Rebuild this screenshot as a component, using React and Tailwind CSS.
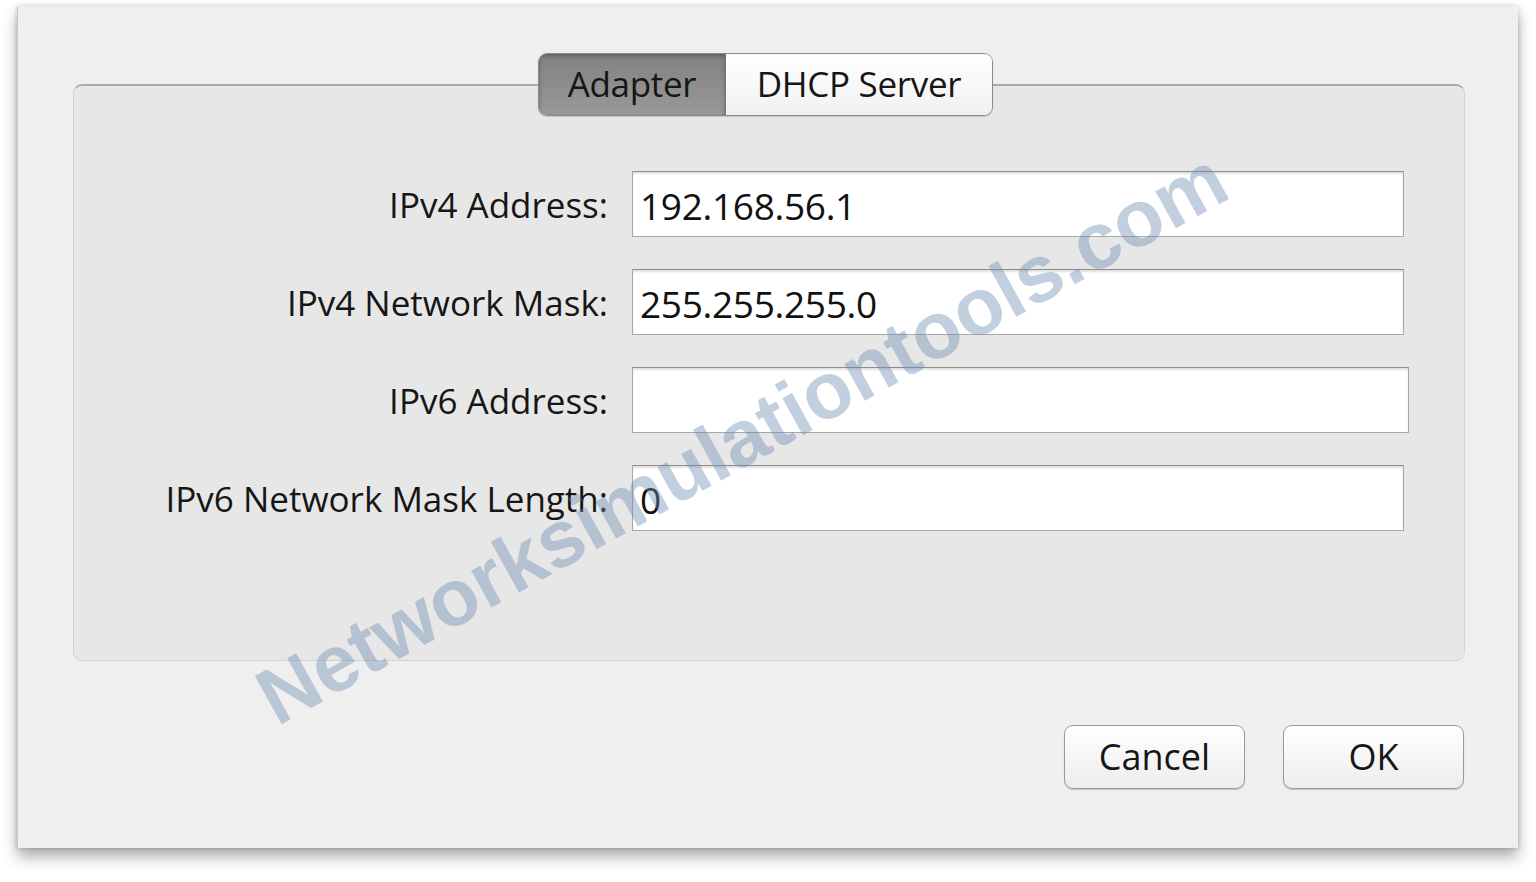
export default function App() {
  const font = { fontFamily: '"Open Sans", "DejaVu Sans", sans-serif' };
  const rows = [
    { label: "IPv4 Address:", value: "192.168.56.1", w: "w-[772px]" },
    { label: "IPv4 Network Mask:", value: "255.255.255.0", w: "w-[772px]" },
    { label: "IPv6 Address:", value: "", w: "w-[777px]" },
    { label: "IPv6 Network Mask Length:", value: "0", w: "w-[772px]" },
  ];

  return (
    <div className="relative w-[1536px] h-[882px] bg-white overflow-hidden pt-[6px] pl-[17px]" style={font}>
      {/* window */}
      <div className="w-[1501px] h-[842px] bg-[#efefef] border-l border-[#c8c8c8] shadow-[0_9px_14px_rgba(0,0,0,0.32),0_0_5px_rgba(0,0,0,0.18)] pt-[47px] pl-[55px] pr-[54px]">
        {/* tabs */}
        <div className="relative z-10 ml-[465px] flex w-[455px] h-[63px] -mb-[32px] rounded-[9px] border border-[#8b8b8b] overflow-hidden shadow-[0_1px_1px_rgba(0,0,0,0.15)]">
          <div className="w-[187px] flex items-center justify-center bg-gradient-to-b from-[#818181] to-[#999999] shadow-[inset_0_2px_4px_rgba(0,0,0,0.3)] border-r border-[#777] text-[35px] font-medium text-[#161616] tracking-[-0.3px]">
            Adapter
          </div>
          <div className="flex-1 flex items-center justify-center bg-gradient-to-b from-white to-[#f1f1f1] text-[35px] font-medium text-[#161616] tracking-[-0.3px]">
            DHCP Server
          </div>
        </div>

        {/* group box */}
        <div className="w-[1392px] h-[577px] bg-[#e7e7e7] rounded-[9px] border border-[#d2d2d2] border-t-[2px] border-t-[#a9a9a9] pt-[85px] flex flex-col gap-[32px]">
          {rows.map((r) => (
            <div key={r.label} className="flex items-center gap-[24px]">
              <div className="w-[534px] text-right text-[35px] font-medium text-[#161616] whitespace-nowrap leading-none">
                {r.label}
              </div>
              <div className={`${r.w} h-[66px] bg-white border border-[#a8a8a8] border-t-[#8c8c8c] shadow-[inset_0_2px_2px_rgba(0,0,0,0.12)] flex items-center pl-[7px] pt-[3px] text-[37px] font-medium text-[#111] leading-none tracking-[-0.3px]`}>
                {r.value}
              </div>
            </div>
          ))}
        </div>

        {/* buttons */}
        <div className="flex justify-end gap-[38px] mt-[64px]">
          <button className="w-[181px] h-[64px] rounded-[9px] border border-[#9a9a9a] bg-gradient-to-b from-white to-[#ededed] shadow-[0_1px_1px_rgba(0,0,0,0.2)] text-[36px] font-medium text-[#161616] leading-none">
            Cancel
          </button>
          <button className="w-[181px] h-[64px] rounded-[9px] border border-[#9a9a9a] bg-gradient-to-b from-white to-[#ededed] shadow-[0_1px_1px_rgba(0,0,0,0.2)] text-[36px] font-medium text-[#161616] leading-none">
            OK
          </button>
        </div>
      </div>

      {/* watermark */}
      <div
        className="absolute left-[742px] top-[438px] -translate-x-1/2 -translate-y-1/2 -rotate-[29deg] whitespace-nowrap text-[80px] font-bold text-[rgba(110,140,178,0.42)] pointer-events-none leading-none"
        style={{ fontFamily: '"Liberation Sans", Arial, sans-serif' }}
      >
        Networksimulationtools.com
      </div>
    </div>
  );
}
